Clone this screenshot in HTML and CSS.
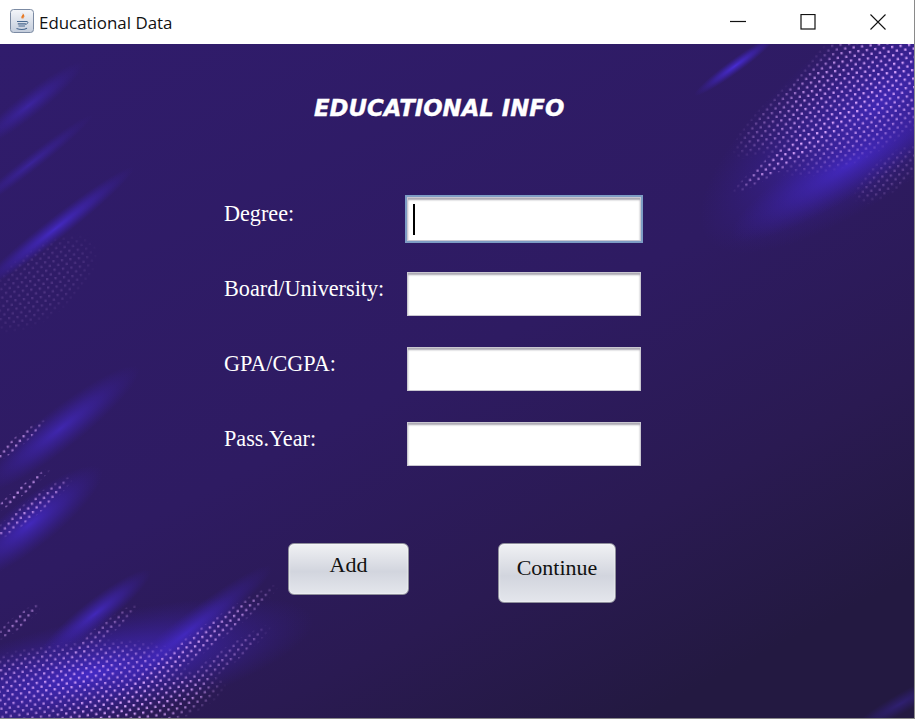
FILE: index.html
```html
<!DOCTYPE html>
<html lang="en">
<head>
    <meta charset="UTF-8">
    <meta name="viewport" content="width=device-width, initial-scale=1.0">
    <title>Educational Data</title>
    <link rel="stylesheet" href="styles.css">
</head>
<body>
    <div class="window">
        <header class="titlebar">
            <div class="app-icon">
                <svg width="24" height="24" viewBox="0 0 24 24">
                    <defs>
                        <linearGradient id="iconBg" x1="0" y1="0" x2="0" y2="1">
                            <stop offset="0" stop-color="#f4f6fa"/>
                            <stop offset="1" stop-color="#c3ccdb"/>
                        </linearGradient>
                    </defs>
                    <rect x="0.5" y="0.5" width="23" height="23" rx="3" fill="url(#iconBg)" stroke="#7b8aa3"/>
                    <path d="M12.5 4c1.500 1.800-1.800 2.800-1 5 .3.800 1 1.200 1 1.200-.5-1.500 2.600-2.600 1.300-4.600-.3-.6-.8-1-1.300-1.600z" fill="#e8771f"/>
                    <path d="M14.500 6.500c-1 .8-1.600 1.500-.9 3.500.1-1 .9-2.300.9-3.500z" fill="#e8771f"/>
                    <path d="M7 12.500h9.500M7.800 14.800h8M8.500 17h6.500" stroke="#48688f" stroke-width="1.200" fill="none"/>
                    <path d="M16 12.500c2.500-.6 2.800 2.300-.6 2.900" stroke="#48688f" stroke-width="1" fill="none"/>
                    <path d="M6.500 19.500c3 1 8 1 10.500-.3" stroke="#48688f" stroke-width="1.100" fill="none"/>
                </svg>
            </div>
            <span class="app-title">Educational Data</span>
            <div class="win-controls">
                <span class="win-btn">
                    <svg width="16" height="16" viewBox="0 0 16 16"><path d="M0 7.500h16" stroke="#111" stroke-width="1.200"/></svg>
                </span>
                <span class="win-btn">
                    <svg width="16" height="16" viewBox="0 0 16 16"><rect x="1" y="0.500" width="14" height="14.500" fill="none" stroke="#111" stroke-width="1.200"/></svg>
                </span>
                <span class="win-btn">
                    <svg width="16" height="16" viewBox="0 0 16 16"><path d="M0.500 0.500l15 15M15.500 0.500l-15 15" stroke="#111" stroke-width="1.100"/></svg>
                </span>
            </div>
        </header>

        <main class="panel">
            <svg class="panel-bg" viewBox="0 0 914 674" preserveAspectRatio="none">
                <defs>
                    <linearGradient id="base" x1="0" y1="0" x2="0.7" y2="1">
                        <stop offset="0" stop-color="#301c6c"/>
                        <stop offset="0.55" stop-color="#2e1b62"/>
                        <stop offset="0.8" stop-color="#2a1a52"/>
                        <stop offset="1" stop-color="#231941"/>
                    </linearGradient>
                    <radialGradient id="blue">
                        <stop offset="0" stop-color="#4a2ee0"/>
                        <stop offset="0.5" stop-color="#4126c0" stop-opacity="0.6"/>
                        <stop offset="1" stop-color="#3a20a8" stop-opacity="0"/>
                    </radialGradient>
                    <radialGradient id="fade">
                        <stop offset="0" stop-color="#fff"/>
                        <stop offset="0.7" stop-color="#fff" stop-opacity="0.7"/>
                        <stop offset="1" stop-color="#fff" stop-opacity="0"/>
                    </radialGradient>
                    <pattern id="dots" width="8.500" height="8.500" patternUnits="userSpaceOnUse" patternTransform="rotate(-7)">
                        <rect x="0" y="0" width="2.300" height="2.300" fill="#dca6ff"/>
                        <rect x="4.250" y="4.250" width="2.300" height="2.300" fill="#dca6ff"/>
                    </pattern>
                    <mask id="dotMask">
                        <g fill="url(#fade)">
                            <ellipse cx="885" cy="30" rx="150" ry="62" transform="rotate(-38 885 30)"/>
                            <ellipse cx="810" cy="95" rx="95" ry="11" transform="rotate(-35 810 95)"/>
                            <ellipse cx="800" cy="60" rx="85" ry="24" transform="rotate(-38 800 60)" opacity="0.5"/>
                            <ellipse cx="890" cy="130" rx="45" ry="18" transform="rotate(-38 890 130)" opacity="0.3"/>
                            <ellipse cx="40" cy="240" rx="70" ry="35" transform="rotate(-38 40 240)" opacity="0.2"/>
                            <ellipse cx="15" cy="400" rx="40" ry="6" transform="rotate(-38 15 400)" opacity="0.8"/>
                            <ellipse cx="20" cy="448" rx="40" ry="5" transform="rotate(-38 20 448)" opacity="0.9"/>
                            <ellipse cx="30" cy="466" rx="55" ry="9" transform="rotate(-38 30 466)" opacity="0.8"/>
                            <ellipse cx="18" cy="578" rx="30" ry="7" transform="rotate(-38 18 578)" opacity="0.7"/>
                            <ellipse cx="60" cy="640" rx="135" ry="42" transform="rotate(-8 60 640)" opacity="0.9"/>
                            <ellipse cx="130" cy="664" rx="100" ry="28" transform="rotate(-15 130 664)"/>
                            <ellipse cx="190" cy="605" rx="110" ry="12" transform="rotate(-36 190 605)" opacity="0.9"/>
                            <ellipse cx="215" cy="622" rx="70" ry="10" transform="rotate(-36 215 622)" opacity="0.5"/>
                            <ellipse cx="100" cy="590" rx="50" ry="8" transform="rotate(-38 100 590)" opacity="0.55"/>
                        </g>
                    </mask>
                </defs>
                <rect width="914" height="674" fill="url(#base)"/>
                <g fill="url(#blue)">
                    <ellipse cx="880" cy="60" rx="220" ry="80" transform="rotate(-38 880 60)" opacity="0.65"/>
                    <ellipse cx="850" cy="120" rx="140" ry="30" transform="rotate(-32 850 120)" opacity="0.6"/>
                    <ellipse cx="735" cy="22" rx="50" ry="7" transform="rotate(-36 735 22)" opacity="0.9"/>
                    <ellipse cx="28" cy="62" rx="70" ry="12" transform="rotate(-38 28 62)" opacity="0.45"/>
                    <ellipse cx="30" cy="120" rx="80" ry="8" transform="rotate(-38 30 120)" opacity="0.4"/>
                    <ellipse cx="55" cy="185" rx="100" ry="11" transform="rotate(-38 55 185)" opacity="0.75"/>
                    <ellipse cx="60" cy="385" rx="100" ry="20" transform="rotate(-38 60 385)" opacity="0.6"/>
                    <ellipse cx="30" cy="480" rx="90" ry="24" transform="rotate(-38 30 480)" opacity="0.7"/>
                    <ellipse cx="90" cy="630" rx="230" ry="55" transform="rotate(-14 90 630)" opacity="0.8"/>
                    <ellipse cx="95" cy="570" rx="70" ry="14" transform="rotate(-38 95 570)" opacity="0.7"/>
                    <ellipse cx="185" cy="590" rx="110" ry="16" transform="rotate(-38 185 590)" opacity="0.6"/>
                    <ellipse cx="900" cy="660" rx="60" ry="10" transform="rotate(-30 900 660)" opacity="0.3"/>
                </g>
                <rect width="914" height="674" fill="url(#dots)" mask="url(#dotMask)"/>
            </svg>

            <div class="panel-content">
                <h1 class="heading">EDUCATIONAL INFO</h1>
                <form class="form-grid">
                    <label class="field-label">Degree:</label>
                    <div class="field field-focus"><span class="caret"></span></div>
                    <label class="field-label">Board/University:</label>
                    <div class="field"></div>
                    <label class="field-label">GPA/CGPA:</label>
                    <div class="field"></div>
                    <label class="field-label">Pass.Year:</label>
                    <div class="field"></div>
                </form>
                <div class="actions">
                    <button class="btn btn-add" type="button">Add</button>
                    <button class="btn btn-continue" type="button">Continue</button>
                </div>
            </div>
        </main>
    </div>
</body>
</html>
```

FILE: styles.css
```css
* {
    box-sizing: border-box;
}
html, body {
    margin: 0;
    height: 100%;
}
body {
    background: #fff;
    overflow: hidden;
}
.window {
    width: 915px;
    height: 719px;
    display: flex;
    flex-direction: column;
    border-right: 1px solid #8a8a8a;
    border-bottom: 1px solid #8a8a8a;
}
.titlebar {
    height: 44px;
    flex: none;
    display: flex;
    align-items: center;
    padding-left: 10px;
    background: #fff;
}
.app-icon {
    width: 24px;
    height: 24px;
    margin-right: 5px;
    margin-top: -3px;
}
.app-title {
    font-family: "Open Sans", "Noto Sans", sans-serif;
    font-size: 16.9px;
    color: #111;
}
.win-controls {
    margin-left: auto;
    display: flex;
    gap: 54px;
    padding-right: 28px;
    margin-top: -1px;
}
.win-btn {
    display: block;
    width: 16px;
    height: 16px;
}
.win-btn svg {
    display: block;
}
.panel {
    flex: 1;
    display: grid;
    overflow: hidden;
}
.panel-bg {
    grid-area: 1 / 1;
    width: 914px;
    height: 674px;
    display: block;
}
.panel-content {
    grid-area: 1 / 1;
    display: flex;
    flex-direction: column;
}
.heading {
    margin: 49px 0 0 314px;
    font-family: "DejaVu Sans", sans-serif;
    font-size: 22.8px;
    line-height: 30px;
    font-weight: 700;
    font-style: italic;
    white-space: nowrap;
    color: #fff;
    -webkit-text-stroke: 0.4px #fff;
}
.form-grid {
    margin: 74px 0 0 224px;
    display: grid;
    grid-template-columns: 183px 234px;
    grid-auto-rows: 44px;
    row-gap: 31px;
}
.field-label {
    font-family: "Liberation Serif", serif;
    font-size: 22.2px;
    line-height: 26px;
    color: #fff;
    margin-top: 4px;
}
.field {
    background: #fff;
    border: 1px solid #c9c7d0;
    box-shadow: inset 0 2px 2px #a9a6b0;
    display: flex;
    align-items: center;
}
.field-focus {
    outline: 2px solid #7d9cc4;
    padding-left: 5px;
}
.caret {
    width: 2px;
    height: 31px;
    background: #000;
}
.actions {
    margin: 77px 0 0 288px;
    display: flex;
    align-items: flex-start;
    gap: 89px;
}
.btn {
    font-family: "Liberation Serif", serif;
    font-size: 22px;
    color: #111;
    border: 1px solid #8f8f9c;
    border-radius: 6px;
    background: linear-gradient(#f0f1f4, #d2d5de 55%, #e4e6ec);
    box-shadow: inset 0 0 2px #fff;
}
.btn-add {
    width: 121px;
    height: 52px;
    padding: 0 0 8px;
}
.btn-continue {
    width: 118px;
    height: 60px;
    padding: 0 0 11px;
}
```
